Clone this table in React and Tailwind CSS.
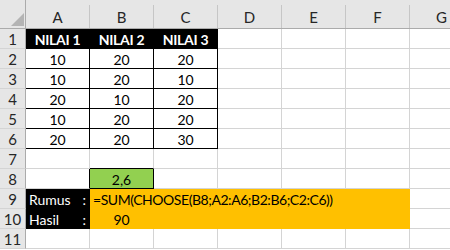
import React from 'react';

const COLS = ['A', 'B', 'C', 'D', 'E', 'F', 'G'];

// values for A1:C6
const TABLE = [
  ['NILAI 1', 'NILAI 2', 'NILAI 3'],
  ['10', '20', '20'],
  ['10', '20', '10'],
  ['20', '10', '20'],
  ['10', '20', '20'],
  ['20', '20', '30'],
];

const FONT = { fontFamily: 'Lato, "Liberation Sans", sans-serif' };

function Corner() {
  return (
    <div className="relative bg-[#e6e6e6] border-r border-b border-r-[#ababab] border-b-[#ababab]">
      <svg className="absolute left-[11px] top-[13px]" width="13" height="13" viewBox="0 0 13 13">
        <polygon points="13,0 13,13 0,13" fill="#b4b4b4" />
      </svg>
    </div>
  );
}

function ColHead({ label }) {
  return (
    <div className="flex flex-col bg-[#e6e6e6] border-b border-[#ababab]">
      <div className="h-[9px]" />
      <div className="flex-1 flex items-center justify-center border-r border-[#c6c6c6] text-[15px] text-[#262626] pt-[1px]">
        {label}
      </div>
    </div>
  );
}

function RowHead({ n }) {
  return (
    <div className="flex items-center justify-center pt-[1px] bg-[#e6e6e6] border-r border-b border-r-[#ababab] border-b-[#d4d4d4] text-[15px] text-[#262626]">
      {n}
    </div>
  );
}

function Cell({ className = '', children }) {
  return (
    <div className={`flex items-center pt-[1px] border-r border-b text-[14px] text-black whitespace-nowrap ${className}`}>
      {children}
    </div>
  );
}

function gridCell(r, c) {
  const key = `${COLS[c]}${r}`;
  if (r <= 6 && c <= 2) {
    const head = r === 1;
    return (
      <Cell
        key={key}
        className={`justify-center border-black ${head ? 'bg-black text-white font-bold tracking-[-0.3px]' : 'bg-white'}`}
      >
        {TABLE[r - 1][c]}
      </Cell>
    );
  }
  if (r === 7 && c === 1) {
    return <Cell key={key} className="bg-white border-r-[#d4d4d4] border-b-black" />;
  }
  if (r === 8 && c === 0) {
    return <Cell key={key} className="bg-white border-r-black border-b-[#d4d4d4]" />;
  }
  if (r === 8 && c === 1) {
    return (
      <Cell key={key} className="justify-center bg-[#92d050] border-black">
        2,6
      </Cell>
    );
  }
  return <Cell key={key} className="bg-white border-[#d4d4d4]" />;
}

function SumRow({ label, children, center }) {
  return (
    <>
      <Cell className="justify-between px-[3px] bg-black border-black text-white">
        <span>{label}</span>
        <span>:</span>
      </Cell>
      <Cell className="col-span-5 bg-[#ffc000] border-[#ffc000]">
        <span className={center ? 'w-[63px] text-center' : 'pl-[3px] tracking-[-0.45px]'}>{children}</span>
      </Cell>
      <Cell className="bg-white border-[#d4d4d4]" />
    </>
  );
}

export default function App() {
  const rows = [];
  for (let r = 1; r <= 11; r++) {
    rows.push(<RowHead key={`h${r}`} n={r} />);
    if (r === 9) {
      rows.push(
        <SumRow key="r9" label="Rumus">
          =SUM(CHOOSE(B8;A2:A6;B2:B6;C2:C6))
        </SumRow>
      );
    } else if (r === 10) {
      rows.push(
        <SumRow key="r10" label="Hasil" center>
          90
        </SumRow>
      );
    } else {
      for (let c = 0; c < COLS.length; c++) rows.push(gridCell(r, c));
    }
  }

  return (
    <div className="w-[450px] h-[250px] overflow-hidden bg-white" style={FONT}>
      <div className="grid grid-cols-[26px_repeat(7,64px)] grid-rows-[29px_repeat(11,20px)] w-[474px]">
        <Corner />
        {COLS.map((c) => (
          <ColHead key={c} label={c} />
        ))}
        {rows}
      </div>
    </div>
  );
}
